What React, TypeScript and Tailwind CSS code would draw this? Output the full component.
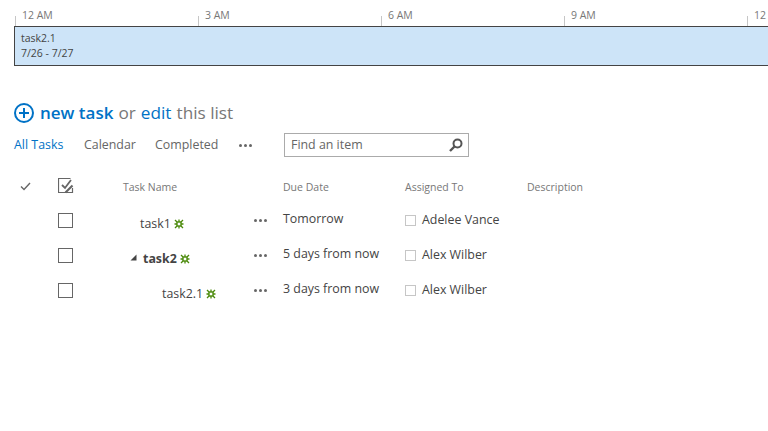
const font = { fontFamily: '"Open Sans", "Noto Sans", sans-serif' };

function NewIcon() {
  return (
    <svg width="10" height="10" viewBox="0 0 10 10" className="ml-[3px] shrink-0" fill="none" stroke="#4b8a0b" strokeWidth="1.300">
      <rect x="3" y="3" width="4" height="4" strokeWidth="1.400" />
      <path d="M5 0.500v2.500M5 7v2.500M0.500 5H3M7 5h2.500M1 1l2 2M9 1L7 3M1 9l2-2M9 9L7 7" />
    </svg>
  );
}

function Dots({ className = "" }: { className?: string }) {
  return (
    <div className={"flex gap-[2px] items-center " + className}>
      <span className="w-[3px] h-[3px] rounded-full bg-[#666]" />
      <span className="w-[3px] h-[3px] rounded-full bg-[#666]" />
      <span className="w-[3px] h-[3px] rounded-full bg-[#666]" />
    </div>
  );
}

const rows = [
  { name: "task1", pad: "pl-[17px]", due: "Tomorrow", who: "Adelee Vance", bold: false, tri: false },
  { name: "task2", pad: "pl-[7px]", due: "5 days from now", who: "Alex Wilber", bold: true, tri: true },
  { name: "task2.1", pad: "pl-[39px]", due: "3 days from now", who: "Alex Wilber", bold: false, tri: false },
];

export default function App() {
  return (
    <div className="w-[768px] h-[431px] bg-white overflow-hidden text-[#444]" style={font}>
      <div className="flex h-[26px] pl-[15px] pt-[9px] w-[950px]">
        {["12 AM", "3 AM", "6 AM", "9 AM", "12"].map((t) => (
          <div key={t} className="w-[183px] shrink-0 relative border-l border-[#c6c6c6] mt-[7px] h-[10px]">
            <span className="absolute left-[6px] top-[-8px] text-[10.5px] leading-[14px] text-[#777] whitespace-nowrap">{t}</span>
          </div>
        ))}
      </div>
      <div className="ml-[14px] h-[40px] border-y border-l border-[#444] bg-[#cde4f8] pl-[6px] pt-[4px] text-[10.5px] leading-[15px] text-[#444]">
        <div>task2.1</div>
        <div>7/26 - 7/27</div>
      </div>

      <div className="flex items-center pl-[14px] mt-[36px] h-[22px] text-[17.2px] whitespace-nowrap">
        <svg width="20" height="20" viewBox="0 0 20 20" fill="none" stroke="#0072c6" className="shrink-0">
          <circle cx="10" cy="10" r="9" strokeWidth="2" />
          <path d="M10 5v10M5 10h10" strokeWidth="2" />
        </svg>
        <span className="ml-[6px] font-semibold text-[17px] text-[#0072c6]">new task</span>
        <span className="ml-[5px] text-[#777]">or</span>
        <span className="ml-[5px] text-[#0072c6]">edit</span>
        <span className="ml-[5px] text-[#777]">this list</span>
      </div>

      <div className="flex items-center pl-[14px] mt-[9px] h-[24px] text-[12.4px] text-[#666] whitespace-nowrap">
        <span className="w-[70px] pt-[1px] text-[#0072c6]">All Tasks</span>
        <span className="w-[71px] pt-[1px]">Calendar</span>
        <span className="w-[84px] pt-[1px]">Completed</span>
        <Dots className="w-[45px]" />
        <div className="w-[185px] h-[24px] border border-[#ababab] flex items-center justify-between pl-[6px] pr-[4px] text-[#666]">
          <span className="pt-[1px]">Find an item</span>
          <svg width="16" height="16" viewBox="0 0 16 16" fill="none" stroke="#555" strokeWidth="2">
            <circle cx="9.500" cy="6.500" r="4" />
            <path d="M6.500 9.500L2 14" strokeWidth="2.400" />
          </svg>
        </div>
      </div>

      <div className="flex items-center pl-[14px] mt-[19px] h-[24px] text-[10.5px] text-[#777] whitespace-nowrap">
        <div className="w-[44px] pl-[6px] mb-[3px]">
          <svg width="11" height="9" viewBox="0 0 11 9" fill="none" stroke="#666" strokeWidth="1.400">
            <path d="M1 4.500l3 3 6-6.500" />
          </svg>
        </div>
        <div className="w-[65px] mb-[3px]">
          <svg width="17" height="17" viewBox="0 0 17 17" fill="none">
            <path d="M14.500 10v4.500H0.500V0.500h12" stroke="#666" strokeWidth="1.200" />
            <path d="M4 7l3 3 6-8" stroke="#666" strokeWidth="1.800" />
            <path d="M7.500 14.500l7-7" stroke="#666" strokeWidth="2.200" />
          </svg>
        </div>
        <div className="w-[160px]">Task Name</div>
        <div className="w-[122px]">Due Date</div>
        <div className="w-[122px]">Assigned To</div>
        <div>Description</div>
      </div>

      <div className="flex flex-col pl-[14px] mt-[3px] text-[12.4px] text-[#444] whitespace-nowrap">
        {rows.map((r) => (
          <div key={r.name} className="flex items-center h-[35px]">
            <div className="w-[44px]" />
            <div className="w-[65px]">
              <div className="w-[15px] h-[15px] border border-[#666]" />
            </div>
            <div className={"w-[131px] mt-[8px] flex items-center " + r.pad}>
              {r.tri && (
                <svg width="7" height="7" viewBox="0 0 7 7" className="mr-[6px] mb-[4px] shrink-0">
                  <path d="M6.500 0.500V6.500H0.500z" fill="#444" />
                </svg>
              )}
              <span className={r.bold ? "font-bold" : ""}>{r.name}</span>
              <NewIcon />
            </div>
            <Dots className="w-[29px]" />
            <div className="w-[122px] mb-[3px]">{r.due}</div>
            <div className="flex items-center">
              <div className="w-[9px] h-[9px] border border-[#c6c6c6] box-content mr-[6px]" />
              <span>{r.who}</span>
            </div>
          </div>
        ))}
      </div>
    </div>
  );
}
